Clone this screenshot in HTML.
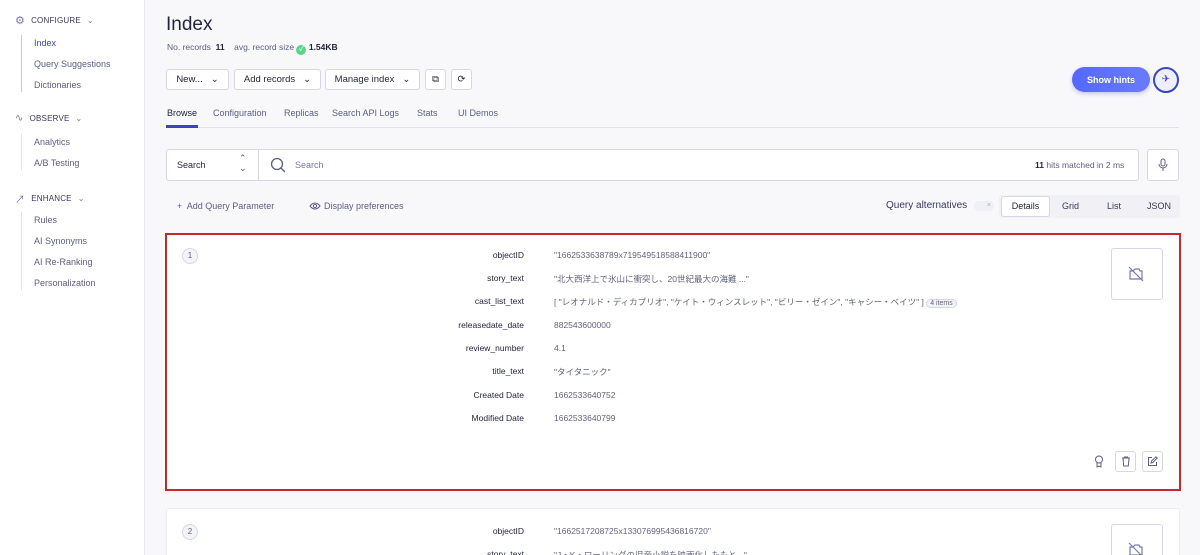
<!DOCTYPE html>
<html style="width:1200px;height:555px;overflow:hidden"><head><meta charset="utf-8"><style>
*{box-sizing:border-box;margin:0;padding:0}
body{width:1200px;height:555px;overflow:hidden;background:#f8f8fb;font-family:"Liberation Sans","Noto Sans CJK JP",sans-serif;color:#23263b;font-size:9px;position:relative}
.abs{position:absolute}
.side{left:0;top:0;width:145px;height:555px;background:#fff;border-right:1px solid #e8e8ee}
.sec{position:absolute;left:15px;font-size:8px;color:#36395a;letter-spacing:.2px;display:flex;align-items:center;gap:6px}
.item{position:absolute;left:34px;font-size:9px;color:#5d6081}
.vl{position:absolute;left:21px;width:1px;background:#e2e2ea}
.btn{position:absolute;top:69px;height:21px;background:#fff;border:1px solid #d6d6e7;border-radius:3px;font-size:9.5px;color:#23263b;display:flex;align-items:center;justify-content:center;gap:8px}
.tab{position:absolute;top:108px;font-size:9px;color:#5d6081}
.lbl{position:absolute;right:676px;font-size:8.5px;color:#23263b;text-align:right}
.val{position:absolute;left:554px;font-size:8.5px;color:#62647a;white-space:nowrap}
.ib{position:absolute;background:#fff;border:1px solid #d6d6e7;border-radius:3px}
</style></head><body>
<div class="abs side">
<div class="sec" style="top:14px"><span style="font-size:11px;color:#777aaf">⚙</span>CONFIGURE <span style="color:#777">⌄</span></div>
<div class="vl" style="top:35px;height:57px;background:#c7c9e8"></div>
<div class="item" style="top:38px;color:#3a46b9">Index</div>
<div class="item" style="top:59px">Query Suggestions</div>
<div class="item" style="top:80px">Dictionaries</div>
<div class="sec" style="top:113px"><span style="font-size:10px;color:#777aaf">∿</span>OBSERVE <span style="color:#777">⌄</span></div>
<div class="vl" style="top:134px;height:36px"></div>
<div class="item" style="top:137px">Analytics</div>
<div class="item" style="top:158px">A/B Testing</div>
<div class="sec" style="top:191px"><span style="font-size:10px;color:#777aaf">↗</span>ENHANCE <span style="color:#777">⌄</span></div>
<div class="vl" style="top:212px;height:78px"></div>
<div class="item" style="top:215px">Rules</div>
<div class="item" style="top:236px">AI Synonyms</div>
<div class="item" style="top:257px">AI Re-Ranking</div>
<div class="item" style="top:278px">Personalization</div>
</div>

<div class="abs" style="left:166px;top:14px;font-size:19px;font-weight:500;color:#23263b">Index</div>
<div class="abs" style="left:167px;top:42px;font-size:8.5px;color:#5d6081">No. records&nbsp; <b style="color:#23263b">11</b>&nbsp;&nbsp;&nbsp;&nbsp;avg. record size <span style="display:inline-block;width:10px;height:10px;border-radius:50%;background:#5cd38a;vertical-align:-1px;color:#fff;font-size:7px;text-align:center;line-height:10px">✓</span> <b style="color:#23263b">1.54KB</b></div>

<div class="btn" style="left:166px;width:63px">New... <span>⌄</span></div>
<div class="btn" style="left:234px;width:87px">Add records <span>⌄</span></div>
<div class="btn" style="left:325px;width:95px">Manage index <span>⌄</span></div>
<div class="btn" style="left:425px;width:21px">⧉</div>
<div class="btn" style="left:451px;width:21px">⟳</div>

<div class="abs" style="left:1072px;top:67px;width:78px;height:25px;border-radius:13px;background:linear-gradient(90deg,#5468ff,#6b7bff);color:#fff;font-size:9px;font-weight:bold;display:flex;align-items:center;justify-content:center;box-shadow:0 2px 4px rgba(80,90,200,.3)">Show hints</div>
<div class="abs" style="left:1153px;top:67px;width:26px;height:26px;border-radius:50%;border:2px solid #3a46b9;background:#eef;font-size:10px;text-align:center;line-height:22px;color:#3a46b9">✈</div>

<div class="abs" style="left:166px;top:127px;width:1013px;height:1px;background:#e2e2ea"></div>
<div class="tab" style="left:167px;color:#23263b">Browse</div>
<div class="abs" style="left:166px;top:125px;width:32px;height:3px;background:#3a46b9"></div>
<div class="tab" style="left:213px">Configuration</div>
<div class="tab" style="left:284px">Replicas</div>
<div class="tab" style="left:332px">Search API Logs</div>
<div class="tab" style="left:417px">Stats</div>
<div class="tab" style="left:458px">UI Demos</div>

<div class="abs" style="left:166px;top:149px;width:973px;height:32px;background:#fff;border:1px solid #d6d6e7;border-radius:3px"></div>
<div class="abs" style="left:258px;top:150px;width:1px;height:30px;background:#d6d6e7"></div>
<div class="abs" style="left:177px;top:160px;font-size:9px">Search</div>
<div class="abs" style="left:239px;top:153px;font-size:9px;color:#5d6081;line-height:10px">⌃<br>⌄</div>
<svg class="abs" style="left:270px;top:157px" width="16" height="16" viewBox="0 0 16 16"><circle cx="7" cy="7" r="5.5" fill="none" stroke="#5d6081" stroke-width="1.3"/><path d="M11 11l4 4" stroke="#5d6081" stroke-width="1.3"/></svg>
<div class="abs" style="left:295px;top:160px;font-size:9px;color:#777aaf">Search</div>
<div class="abs" style="left:1035px;top:160px;font-size:8.5px;color:#5d6081"><b style="color:#23263b">11</b> hits matched in 2 ms</div>
<div class="ib" style="left:1147px;top:149px;width:32px;height:32px"></div>
<svg class="abs" style="left:1158px;top:158px" width="10" height="14" viewBox="0 0 10 14"><rect x="3" y="1" width="4" height="7" rx="2" fill="none" stroke="#5d6081"/><path d="M1 6a4 4 0 008 0M5 10v3" fill="none" stroke="#5d6081"/></svg>

<div class="abs" style="left:177px;top:201px;font-size:9px;color:#5d6081">+&nbsp; Add Query Parameter</div>
<svg class="abs" style="left:309px;top:201px" width="12" height="10" viewBox="0 0 12 10"><path d="M1 5q5-6 10 0q-5 6-10 0z" fill="none" stroke="#5d6081"/><circle cx="6" cy="5" r="1.6" fill="none" stroke="#5d6081"/></svg>
<div class="abs" style="left:324px;top:201px;font-size:9px;color:#5d6081">Display preferences</div>
<div class="abs" style="left:886px;top:200px;font-size:10px;color:#36395a">Query alternatives</div>
<div class="abs" style="left:974px;top:201px;width:20px;height:10px;border-radius:5px;background:#eef0f6;font-size:7px;color:#aaa;text-align:right;padding-right:3px;line-height:10px">×</div>
<div class="abs" style="left:999px;top:195px;width:181px;height:23px;background:#f0f0f5;border-radius:3px"></div>
<div class="abs" style="left:1001px;top:196px;width:49px;height:21px;background:#fff;border:1px solid #d6d6e7;border-radius:3px;font-size:9px;text-align:center;line-height:19px">Details</div>
<div class="abs" style="left:1062px;top:201px;font-size:9px;color:#36395a">Grid</div>
<div class="abs" style="left:1107px;top:201px;font-size:9px;color:#36395a">List</div>
<div class="abs" style="left:1147px;top:201px;font-size:9px;color:#36395a">JSON</div>

<div class="abs" style="left:165px;top:233px;width:1016px;height:258px;background:#fff;border:2px solid #c4282d"></div>
<div class="abs" style="left:182px;top:248px;width:16px;height:16px;border-radius:50%;background:#f3f4f8;border:1px solid #d6d6e7;font-size:8px;text-align:center;line-height:14px;color:#5d6081">1</div>
<div class="lbl" style="top:250px">objectID</div><div class="val" style="top:250px">"1662533638789x719549518588411900"</div>
<div class="lbl" style="top:273px">story_text</div><div class="val" style="top:273px">"北大西洋上で氷山に衝突し、20世紀最大の海難 ..."</div>
<div class="lbl" style="top:296px">cast_list_text</div><div class="val" style="top:296px">[ "レオナルド・ディカプリオ", "ケイト・ウィンスレット", "ビリー・ゼイン", "キャシー・ベイツ" ] <span style="font-size:7px;border:1px solid #d6d6e7;border-radius:6px;padding:0 3px;background:#f3f4f8">4 items</span></div>
<div class="lbl" style="top:320px">releasedate_date</div><div class="val" style="top:320px">882543600000</div>
<div class="lbl" style="top:343px">review_number</div><div class="val" style="top:343px">4.1</div>
<div class="lbl" style="top:366px">title_text</div><div class="val" style="top:366px">"タイタニック"</div>
<div class="lbl" style="top:390px">Created Date</div><div class="val" style="top:390px">1662533640752</div>
<div class="lbl" style="top:413px">Modified Date</div><div class="val" style="top:413px">1662533640799</div>
<div class="ib" style="left:1111px;top:248px;width:52px;height:52px"></div>
<svg class="abs" style="left:1127px;top:266px" width="18" height="16" viewBox="0 0 18 16"><path d="M3 5h3l2-2h4l1 2h2v8H3z" fill="none" stroke="#777aaf" stroke-width="1.2"/><path d="M2 1l14 14" stroke="#777aaf" stroke-width="1.2"/></svg>
<svg class="abs" style="left:1094px;top:455px" width="10" height="13" viewBox="0 0 10 13"><circle cx="5" cy="4.5" r="3.5" fill="none" stroke="#5d6081"/><path d="M3 8v4l2-1 2 1V8" fill="none" stroke="#5d6081"/></svg>
<div class="ib" style="left:1115px;top:451px;width:21px;height:21px"></div>
<svg class="abs" style="left:1121px;top:456px" width="10" height="11" viewBox="0 0 10 11"><path d="M1 2h8M3.5 2V1h3v1M2 2l.7 8h4.6L8 2" fill="none" stroke="#5d6081"/></svg>
<div class="ib" style="left:1142px;top:451px;width:21px;height:21px"></div>
<svg class="abs" style="left:1147px;top:456px" width="11" height="11" viewBox="0 0 11 11"><path d="M5 1.5H1.5v8h8V6" fill="none" stroke="#5d6081"/><path d="M4 7l.5-2L9 .8l1.2 1.2L5.8 6.5z" fill="none" stroke="#5d6081"/></svg>

<div class="abs" style="left:166px;top:508px;width:1014px;height:60px;background:#fff;border:1px solid #ececf2;border-radius:3px"></div>
<div class="abs" style="left:182px;top:524px;width:16px;height:16px;border-radius:50%;background:#f3f4f8;border:1px solid #d6d6e7;font-size:8px;text-align:center;line-height:14px;color:#5d6081">2</div>
<div class="lbl" style="top:526px">objectID</div><div class="val" style="top:526px">"1662517208725x133076995436816720"</div>
<div class="lbl" style="top:549px">story_text</div><div class="val" style="top:549px">"J・K・ローリングの児童小説を映画化したもと..."</div>
<div class="ib" style="left:1111px;top:524px;width:52px;height:52px"></div>
<svg class="abs" style="left:1127px;top:542px" width="18" height="16" viewBox="0 0 18 16"><path d="M3 5h3l2-2h4l1 2h2v8H3z" fill="none" stroke="#777aaf" stroke-width="1.2"/><path d="M2 1l14 14" stroke="#777aaf" stroke-width="1.2"/></svg>
</body></html>
